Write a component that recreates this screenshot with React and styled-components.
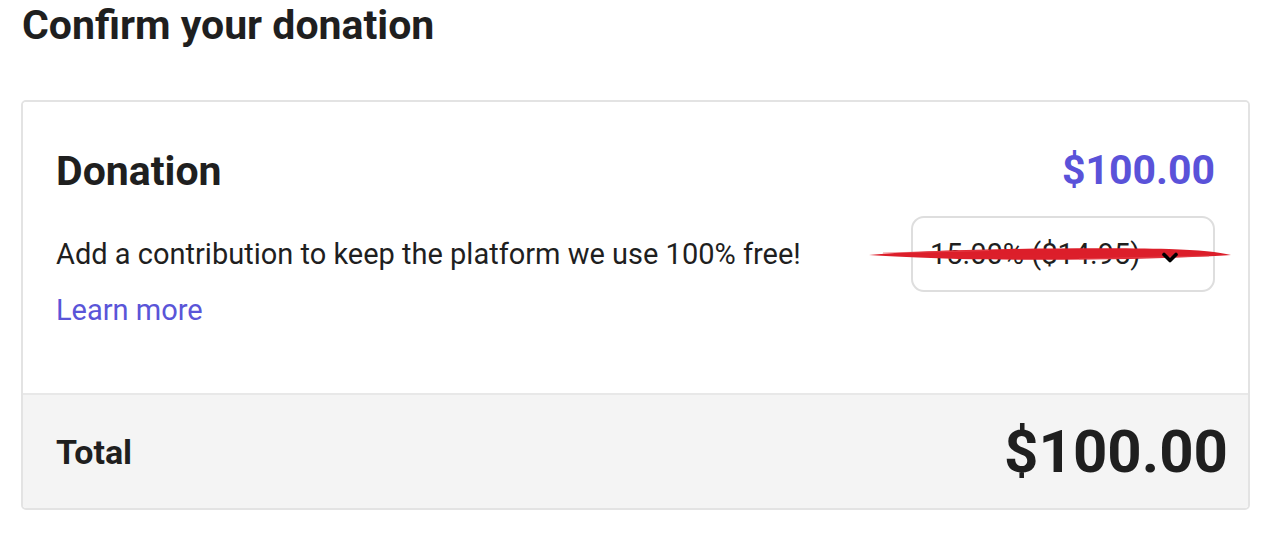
import React from "react";
import styled, { createGlobalStyle } from "styled-components";

const GlobalStyle = createGlobalStyle`
  * { box-sizing: border-box; }
  body {
    margin: 0;
    background: #ffffff;
    font-family: Roboto, "Liberation Sans", Arial, sans-serif;
    color: #1f1f1f;
  }
`;

const Page = styled.div`
  padding: 0 30px 0 21px;
`;

const Title = styled.h1`
  margin: 0;
  padding-left: 1px;
  font-size: 41px;
  line-height: 50px;
  font-weight: 700;
  color: #1f1f1f;
`;

const Card = styled.section`
  margin-top: 50px;
  border: 2px solid #e3e3e3;
  border-radius: 5px;
  overflow: hidden;
`;

const CardBody = styled.div`
  padding: 44px 33px 65px 33px;
  background: #ffffff;
`;

const Row = styled.div`
  display: flex;
  justify-content: space-between;
  align-items: center;
`;

const Heading = styled.h2`
  margin: 0;
  font-size: 41px;
  line-height: 48px;
  font-weight: 700;
`;

const Amount = styled.div`
  font-size: ${(p) => p.$size}px;
  line-height: 1.2;
  font-weight: 700;
  color: ${(p) => p.$color};
`;

const DetailRow = styled(Row)`
  margin-top: 21px;
`;

const Text = styled.p`
  margin: 0;
  font-size: 29px;
  line-height: 36px;
  color: #1f1f1f;
`;

const Link = styled.a`
  display: block;
  font-size: 29px;
  line-height: 36px;
  color: #5a55d8;
  text-decoration: none;
`;

const SelectWrap = styled.div`
  position: relative;
`;

const SelectBox = styled.div`
  display: flex;
  align-items: center;
  gap: 22px;
  width: 304px;
  height: 76px;
  padding: 0 30px 0 17px;
  border: 2px solid #dedede;
  border-radius: 13px;
  font-size: 29px;
  color: #1f1f1f;
  background: #fff;
`;

const Chevron = styled.svg`
  position: relative;
  z-index: 2;
  margin-top: 6px;
`;

const Scribble = styled.svg`
  position: absolute;
  z-index: 1;
  left: -42px;
  top: 27px;
  width: 362px;
  height: 22px;
  pointer-events: none;
`;

const Footer = styled.div`
  display: flex;
  justify-content: space-between;
  align-items: center;
  height: 115px;
  padding: 0 20px 0 33px;
  background: #f4f4f4;
  border-top: 2px solid #e8e8e8;
`;

const FooterLabel = styled.div`
  font-size: 34px;
  font-weight: 700;
  color: #1f1f1f;
`;

export default function App() {
  return (
    <>
      <GlobalStyle />
      <Page>
        <Title>Confirm your donation</Title>
        <Card>
          <CardBody>
            <Row>
              <Heading>Donation</Heading>
              <Amount $size={41} $color="#5a52d9">$100.00</Amount>
            </Row>
            <DetailRow>
              <Text>Add a contribution to keep the platform we use 100% free!</Text>
              <SelectWrap>
                <SelectBox>
                  <span>15.00% ($14.95)</span>
                  <Chevron width="16" height="11" viewBox="0 0 16 11">
                    <path d="M2 2.5 L8 8.5 L14 2.5" fill="none" stroke="#000" strokeWidth="3.6" strokeLinecap="round" strokeLinejoin="round" />
                  </Chevron>
                </SelectBox>
                <Scribble viewBox="0 0 362 22" preserveAspectRatio="none">
                  <path
                    d="M0 12 C30 9 80 7 140 6 C200 5 260 5 300 6 C330 7 350 9 362 12 C345 13 310 15 260 16 C200 17 140 17 90 16 C50 15 20 13 0 12 Z"
                    fill="#dc1f2b"
                  />
                  <path d="M14 10 L120 7.5 M210 16 L340 13" stroke="#ea5058" strokeWidth="1" opacity="0.6" />
                </Scribble>
              </SelectWrap>
            </DetailRow>
            <Link href="#">Learn more</Link>
          </CardBody>
          <Footer>
            <FooterLabel>Total</FooterLabel>
            <Amount $size={60} $color="#1f1f1f">$100.00</Amount>
          </Footer>
        </Card>
      </Page>
    </>
  );
}
